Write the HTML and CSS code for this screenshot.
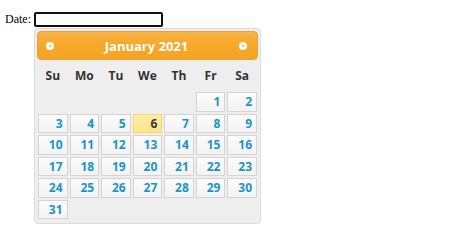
FILE: index.html
```html
<!DOCTYPE html>
<html>
<head>
<meta charset="utf-8">
<link rel="stylesheet" href="styles.css">
</head>
<body>
<div class="field">
  <label for="date">Date:</label>
  <input id="date" type="text">
</div>
<div class="datepicker">
  <div class="header">
    <span class="nav" title="Prev"><svg width="8" height="8" viewBox="0 0 8 8"><circle cx="4" cy="4" r="4" fill="#fff"/><path d="M2.6 4 L4.8 2.5 L4.8 5.5 Z" fill="#f6a828"/></svg></span>
    <span class="title">January 2021</span>
    <span class="nav" title="Next"><svg width="8" height="8" viewBox="0 0 8 8"><circle cx="4" cy="4" r="4" fill="#fff"/><path d="M5.4 4 L3.2 2.5 L3.2 5.5 Z" fill="#f6a828"/></svg></span>
  </div>
  <table class="cal">
    <thead>
      <tr><th>Su</th><th>Mo</th><th>Tu</th><th>We</th><th>Th</th><th>Fr</th><th>Sa</th></tr>
    </thead>
    <tbody>
      <tr><td></td><td></td><td></td><td></td><td></td><td><a href="#">1</a></td><td><a href="#">2</a></td></tr>
      <tr><td><a href="#">3</a></td><td><a href="#">4</a></td><td><a href="#">5</a></td><td class="today"><a href="#">6</a></td><td><a href="#">7</a></td><td><a href="#">8</a></td><td><a href="#">9</a></td></tr>
      <tr><td><a href="#">10</a></td><td><a href="#">11</a></td><td><a href="#">12</a></td><td><a href="#">13</a></td><td><a href="#">14</a></td><td><a href="#">15</a></td><td><a href="#">16</a></td></tr>
      <tr><td><a href="#">17</a></td><td><a href="#">18</a></td><td><a href="#">19</a></td><td><a href="#">20</a></td><td><a href="#">21</a></td><td><a href="#">22</a></td><td><a href="#">23</a></td></tr>
      <tr><td><a href="#">24</a></td><td><a href="#">25</a></td><td><a href="#">26</a></td><td><a href="#">27</a></td><td><a href="#">28</a></td><td><a href="#">29</a></td><td><a href="#">30</a></td></tr>
      <tr><td><a href="#">31</a></td><td></td><td></td><td></td><td></td><td></td><td></td></tr>
    </tbody>
  </table>
</div>
</body>
</html>
```

FILE: styles.css
```css
body {
  margin: 0;
  background: #fff;
  font-family: "Liberation Serif", serif;
  font-size: 12px;
  color: #000;
}

.field {
  display: flex;
  align-items: center;
  gap: 3px;
  margin: 12px 0 0 5px;
}

.field input {
  box-sizing: border-box;
  width: 129px;
  height: 15px;
  margin: 0;
  padding: 0 2px;
  border: 2px solid #111;
  border-radius: 2px;
  background: #fff;
  outline: none;
}

.datepicker {
  position: absolute;
  left: 34px;
  top: 28px;
  width: 221px;
  padding: 2px 2px 0;
  border: 1px solid #dcdcdc;
  border-radius: 4px;
  background: #eee;
  color: #333;
  font-family: "Open Sans", "DejaVu Sans", sans-serif;
}

.header {
  display: flex;
  align-items: center;
  justify-content: space-between;
  height: 27px;
  padding: 0 10px 0 8px;
  border: 1px solid #e9a23a;
  border-radius: 4px;
  background: linear-gradient(#f8b446, #f6a828 50%, #f5a423);
  color: #fff;
  font-weight: bold;
  font-size: 13px;
}

.nav {
  display: flex;
  width: 8px;
  height: 8px;
}

.title {
  line-height: 20px;
}

.cal {
  width: 100%;
  border-collapse: collapse;
  table-layout: fixed;
  margin: 0 0 3px;
  font-size: 12px;
  line-height: 14px;
}

.cal th {
  height: 31px;
  padding: 0;
  font-weight: bold;
  text-align: center;
  color: #333;
}

.cal td {
  height: 21.5px;
  padding: 1px;
  box-sizing: border-box;
}

.cal td a {
  display: block;
  box-sizing: border-box;
  height: 19.5px;
  padding: 0 4px;
  line-height: 17.5px;
  border: 1px solid #d4d4d4;
  background: linear-gradient(#fcfcfc, #f3f3f3);
  color: #1c94c4;
  font-weight: bold;
  text-align: right;
  text-decoration: none;
}

.cal td.today a {
  border-color: #f7d86a;
  background: linear-gradient(#fdeca4, #fde58a);
  color: #363636;
}
```
